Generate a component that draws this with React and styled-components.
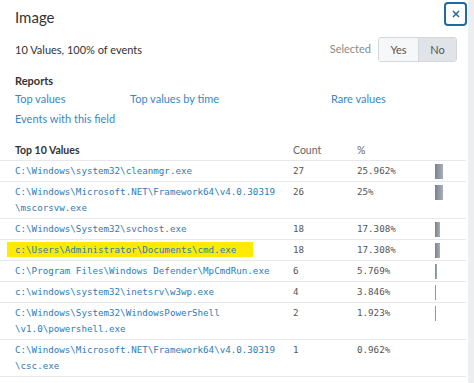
import React from "react";
import styled, { createGlobalStyle } from "styled-components";

const GlobalStyle = createGlobalStyle`
	html, body {
		margin: 0;
		padding: 0;
		background: #ffffff;
	}
	body {
		font-family: Lato, "Open Sans", sans-serif;
		color: #333;
	}
`;

const rows = [
	{ lines: ["C:\\Windows\\system32\\cleanmgr.exe"], count: 27, pct: "25.962%", value: 25.962 },
	{ lines: ["C:\\Windows\\Microsoft.NET\\Framework64\\v4.0.30319", "\\mscorsvw.exe"], count: 26, pct: "25%", value: 25 },
	{ lines: ["C:\\Windows\\System32\\svchost.exe"], count: 18, pct: "17.308%", value: 17.308 },
	{ lines: ["c:\\Users\\Administrator\\Documents\\cmd.exe"], count: 18, pct: "17.308%", value: 17.308, marked: true },
	{ lines: ["C:\\Program Files\\Windows Defender\\MpCmdRun.exe"], count: 6, pct: "5.769%", value: 5.769 },
	{ lines: ["c:\\windows\\system32\\inetsrv\\w3wp.exe"], count: 4, pct: "3.846%", value: 3.846 },
	{ lines: ["C:\\Windows\\System32\\WindowsPowerShell", "\\v1.0\\powershell.exe"], count: 2, pct: "1.923%", value: 1.923 },
	{ lines: ["C:\\Windows\\Microsoft.NET\\Framework64\\v4.0.30319", "\\csc.exe"], count: 1, pct: "0.962%", value: 0.962 },
];

export default function App() {
	return (
		<Page>
			<GlobalStyle />
			<Panel>
				<TitleBar>
					<Title>Image</Title>
					<CloseButton aria-label="close">
						<svg width="8" height="8" viewBox="0 0 8 8">
							<path d="M1 1L7 7M7 1L1 7" stroke="#1d6aa5" strokeWidth="1.5" fill="none" />
						</svg>
					</CloseButton>
				</TitleBar>

				<StatsRow>
					<Stats>10 Values, 100% of events</Stats>
					<SelectedLabel>Selected</SelectedLabel>
					<Toggle>
						<ToggleButton>Yes</ToggleButton>
						<ToggleButton $active>No</ToggleButton>
					</Toggle>
				</StatsRow>

				<SectionLabel>Reports</SectionLabel>
				<Links>
					<Link>Top values</Link>
					<Link>Top values by time</Link>
					<Link>Rare values</Link>
					<Link>Events with this field</Link>
				</Links>

				<Table>
					<HeaderRow>
						<HeadCell $bold>Top 10 Values</HeadCell>
						<HeadCell>Count</HeadCell>
						<HeadCell>%</HeadCell>
						<HeadCell />
					</HeaderRow>
					{rows.map((r, i) => (
						<Row key={i}>
							<ValueCell>
								{r.lines.map((l, j) => (
									<Line key={j}>{r.marked ? <Marked>{l}</Marked> : l}</Line>
								))}
							</ValueCell>
							<NumCell>{r.count}</NumCell>
							<NumCell>{r.pct}</NumCell>
							<BarCell>
								<Bar style={{ width: r.value * 0.31 + "px" }} />
							</BarCell>
						</Row>
					))}
				</Table>
			</Panel>
			<Gutter />
		</Page>
	);
}

const Page = styled.div`
	display: flex;
	width: 474px;
	height: 383px;
	overflow: hidden;
`;

const Panel = styled.div`
	flex: 1;
	min-width: 0;
`;

const Gutter = styled.div`
	width: 6px;
	background: #eceef0;
`;

const TitleBar = styled.div`
	display: flex;
	justify-content: space-between;
	align-items: flex-start;
	padding: 2px 1px 0 15px;
`;

const Title = styled.div`
	font-size: 15px;
	line-height: 18px;
	margin-top: 6px;
	color: #333;
`;

const CloseButton = styled.button`
	width: 23px;
	height: 24px;
	padding: 0;
	display: flex;
	align-items: center;
	justify-content: center;
	border: 2px solid #1d6aa5;
	border-radius: 4px;
	background: #fff;
`;

const StatsRow = styled.div`
	display: flex;
	align-items: center;
	padding: 0 11px 0 15px;
	margin-top: 11px;
	height: 25px;
`;

const Stats = styled.div`
	flex: 1;
	font-size: 11px;
	color: #333;
`;

const SelectedLabel = styled.div`
	font-size: 11px;
	color: #8a8a8a;
	margin-right: 7px;
	margin-top: -3px;
`;

const Toggle = styled.div`
	display: flex;
	height: 25px;
	border: 1px solid #d3d7db;
	border-radius: 3px;
	overflow: hidden;
	box-sizing: border-box;
`;

const ToggleButton = styled.div`
	width: ${(p) => (p.$active ? "37px" : "39px")};
	display: flex;
	align-items: center;
	justify-content: center;
	font-size: 11px;
	color: #555;
	background: ${(p) => (p.$active ? "#e0e4e8" : "#f6f7f8")};
	& + & {
		border-left: 1px solid #d3d7db;
	}
`;

const SectionLabel = styled.div`
	font-size: 11px;
	font-weight: bold;
	line-height: 14px;
	margin-top: 12px;
	padding-left: 15px;
	color: #333;
`;

const Links = styled.div`
	display: grid;
	grid-template-columns: 115px 201px auto;
	padding-left: 15px;
	margin-top: 1px;
`;

const Link = styled.a`
	font-size: 11px;
	line-height: 20px;
	color: #3a87c2;
	cursor: pointer;
`;

const Table = styled.div`
	margin-top: 11px;
	margin-right: 2px;
`;

const HeaderRow = styled.div`
	display: grid;
	grid-template-columns: 293px 64px 78px 1fr;
	height: 20px;
	align-items: center;
	border-bottom: 1px solid #e6e8ea;
`;

const HeadCell = styled.div`
	font-size: 10.5px;
	font-weight: ${(p) => (p.$bold ? "bold" : "normal")};
	color: ${(p) => (p.$bold ? "#333" : "#666")};
	&:first-child {
		padding-left: 15px;
	}
`;

const Row = styled.div`
	display: grid;
	grid-template-columns: 293px 64px 78px 1fr;
	padding: 2px 0;
	border-bottom: 1px solid #e6e8ea;
	font-family: "DejaVu Sans Mono", monospace;
	font-size: 9.2px;
	line-height: 16px;
`;

const ValueCell = styled.div`
	padding-left: 15px;
	color: #2f7bb4;
`;

const Line = styled.div`
	white-space: pre;
`;

const Marked = styled.span`
	background: #ffea00;
	padding: 2px 17px 2px 8px;
	margin-left: -8px;
`;

const NumCell = styled.div`
	color: #555;
`;

const BarCell = styled.div`
	padding-top: 1px;
`;

const Bar = styled.div`
	height: 15px;
	background: linear-gradient(to right, #7a838d, #a8afb7);
`;
